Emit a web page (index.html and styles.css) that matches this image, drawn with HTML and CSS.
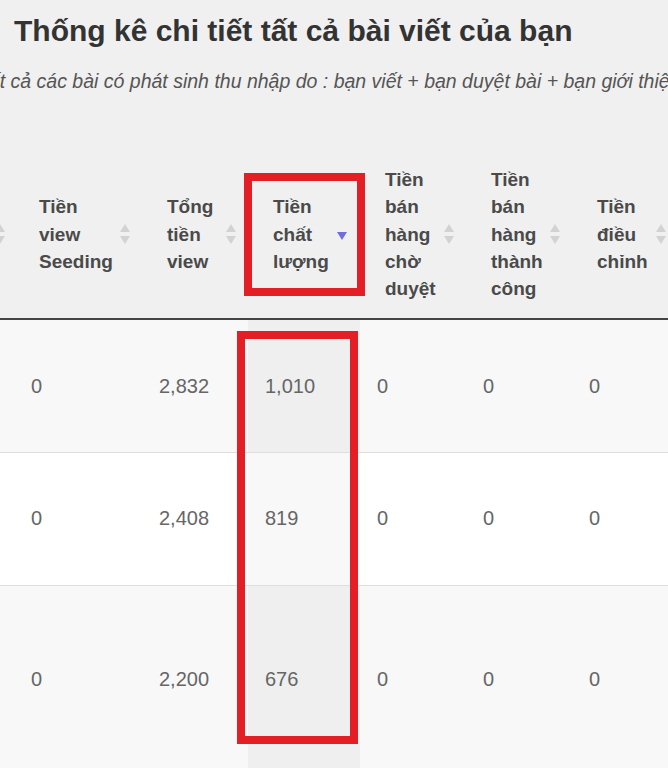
FILE: index.html
```html
<!DOCTYPE html>
<html lang="vi">
<head>
<meta charset="utf-8">
<title>Thống kê chi tiết</title>
<link rel="stylesheet" href="styles.css">
</head>
<body>
<div class="page">
  <h1 class="title">Thống kê chi tiết tất cả bài viết của bạn</h1>
  <p class="subtitle">Tất cả các bài có phát sinh thu nhập do : bạn viết + bạn duyệt bài + bạn giới thiệu</p>
  <div class="table-wrap">
    <table class="stats">
      <colgroup>
        <col class="c-prev"><col class="c-a"><col class="c-b"><col class="c-c"><col class="c-d"><col class="c-e"><col class="c-f">
      </colgroup>
      <thead>
        <tr>
          <th class="th-prev"><div class="thc"><span class="lbl">Tiền view</span><span class="sort"></span></div></th>
          <th><div class="thc"><span class="lbl">Tiền view Seeding</span><span class="sort"></span></div></th>
          <th><div class="thc"><span class="lbl">Tổng tiền view</span><span class="sort"></span></div></th>
          <th><div class="thc"><span class="lbl">Tiền chất lượng</span><span class="sort-desc"></span></div></th>
          <th><div class="thc"><span class="lbl">Tiền bán hàng chờ duyệt</span><span class="sort"></span></div></th>
          <th><div class="thc"><span class="lbl">Tiền bán hàng thành công</span><span class="sort"></span></div></th>
          <th><div class="thc"><span class="lbl">Tiền điều chỉnh</span><span class="sort"></span></div></th>
        </tr>
      </thead>
      <tbody>
        <tr class="odd r1">
          <td></td><td>0</td><td>2,832</td><td class="sorted">1,010</td><td>0</td><td>0</td><td>0</td>
        </tr>
        <tr class="even r2">
          <td></td><td>0</td><td>2,408</td><td class="sorted">819</td><td>0</td><td>0</td><td>0</td>
        </tr>
        <tr class="odd r3">
          <td></td><td>0</td><td>2,200</td><td class="sorted">676</td><td>0</td><td>0</td><td>0</td>
        </tr>
      </tbody>
    </table>
  </div>
  <div class="mark mark-head"></div>
  <div class="mark mark-col"></div>
</div>
</body>
</html>
```
FILE: styles.css
```css
* { box-sizing: border-box; }
html, body {
  margin: 0;
  padding: 0;
  background: #f0f0f0;
  overflow: hidden;
}
.page {
  position: relative;
  width: 668px;
  height: 768px;
  overflow: hidden;
  font-family: "Liberation Sans", Arial, sans-serif;
}
.title {
  margin: 0;
  padding: 14px 0 0 14px;
  font-size: 30px;
  line-height: 34px;
  font-weight: bold;
  color: #333;
  white-space: nowrap;
}
.subtitle {
  margin: 22px 0 0 -23px;
  font-size: 19.5px;
  line-height: 23px;
  font-style: italic;
  color: #555;
  white-space: nowrap;
}
.table-wrap {
  margin-top: 57px;
}
.stats {
  margin-left: -106px;
  border-collapse: collapse;
  table-layout: fixed;
  width: 784px;
}
.c-prev { width: 120px; }
.c-a { width: 128px; }
.c-b { width: 106px; }
.c-c { width: 112px; }
.c-d { width: 106px; }
.c-e { width: 106px; }
.c-f { width: 106px; }

.stats th {
  padding: 16px 12px 16px 25px;
  text-align: left;
  vertical-align: middle;
  font-size: 19px;
  line-height: 27.3px;
  font-weight: bold;
  color: #4a4a4a;
  border-bottom: 2px solid #444;
  background: #f0f0f0;
}
.stats th.th-prev { padding-right: 9px; }
.thc {
  display: flex;
  align-items: center;
}
.lbl {
  display: inline-block;
  width: min-content;
}
.sort, .sort-desc {
  margin-left: auto;
  flex: none;
}
.sort {
  width: 10px;
  height: 20px;
  position: relative;
}
.sort::before, .sort::after {
  content: "";
  position: absolute;
  left: 0;
  border-left: 5px solid transparent;
  border-right: 5px solid transparent;
}
.sort::before {
  top: 0;
  border-bottom: 8px solid #d2d2d2;
}
.sort::after {
  bottom: 0;
  border-top: 8px solid #d2d2d2;
}
.sort-desc {
  width: 0;
  height: 0;
  border-left: 5px solid transparent;
  border-right: 5px solid transparent;
  border-top: 8px solid #6e6ede;
  margin-top: 4px;
  margin-right: 1px;
}

.stats td {
  padding: 0 10px 0 17px;
  font-size: 20px;
  color: #666;
  vertical-align: middle;
  border-bottom: 1px solid #dedede;
}
.r1 td, .r2 td { height: 133px; }
.r3 td { height: 188px; }
.odd td { background: #f8f8f8; }
.even td { background: #ffffff; }
.odd td.sorted { background: #efefef; }
.even td.sorted { background: #f8f8f8; }

.mark {
  position: absolute;
  border: 8px solid #e31e25;
}
.mark-head {
  left: 244px;
  top: 173px;
  width: 121px;
  height: 123px;
}
.mark-col {
  left: 237px;
  top: 331px;
  width: 121px;
  height: 413px;
}
```
